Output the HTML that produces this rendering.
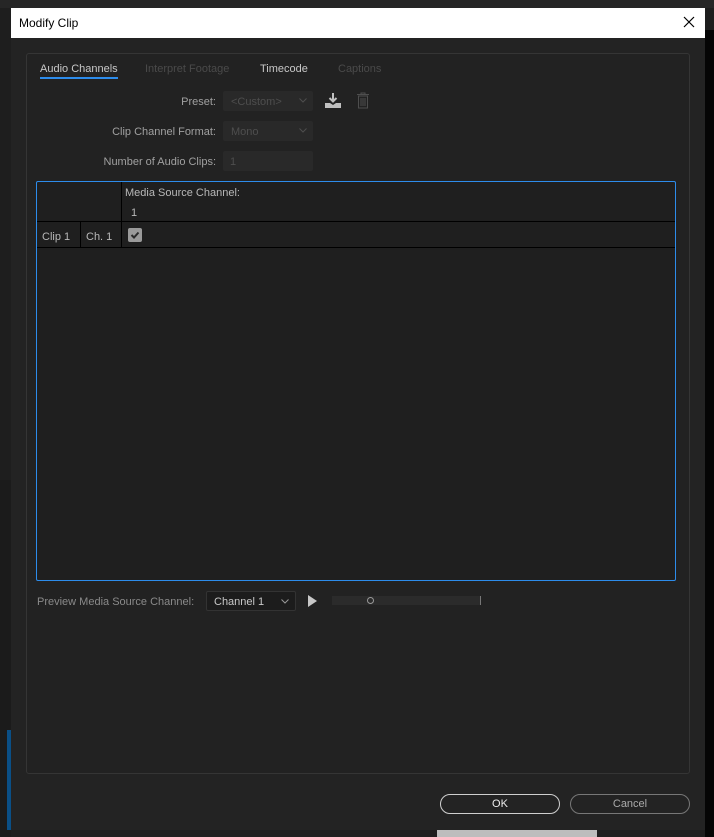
<!DOCTYPE html>
<html><head><style>
*{margin:0;padding:0;box-sizing:border-box}
body{width:714px;height:837px;background:#1e1e1e;position:relative;overflow:hidden;font-family:"Liberation Sans",sans-serif;font-size:11px;color:#b8b8b8}
.a{position:absolute}
.chev{position:absolute;right:6px;top:7px}
</style></head><body>
<div class="a" style="left:0;top:0;width:714px;height:8px;background:#262626"></div>
<div class="a" style="left:705px;top:30px;width:9px;height:807px;background:#050505"></div>
<div class="a" style="left:0;top:480px;width:11px;height:357px;background:#1b1b1b"></div>
<div class="a" style="left:7px;top:730px;width:4px;height:100px;background:#0a4f86"></div>
<div class="a" style="left:11px;top:8px;width:694px;height:30px;background:#fff;color:#000;font-size:12px;padding:8px 0 0 8px">Modify Clip</div>
<svg class="a" style="left:683px;top:16px" width="12" height="12"><path d="M1 1L11 11M11 1L1 11" stroke="#000" stroke-width="1.2"/></svg>
<div class="a" style="left:11px;top:38px;width:694px;height:792px;background:#232323"></div>
<div class="a" style="left:26px;top:53px;width:664px;height:721px;border:1px solid #353535;border-radius:3px;background:#222"></div>
<div class="a" style="left:40px;top:63px;color:#c8c8c8">Audio Channels</div>
<div class="a" style="left:40px;top:77px;width:78px;height:2px;background:#2d8ceb"></div>
<div class="a" style="left:145px;top:63px;color:#4a4a4a">Interpret Footage</div>
<div class="a" style="left:260px;top:63px;color:#c8c8c8">Timecode</div>
<div class="a" style="left:338px;top:63px;color:#4a4a4a">Captions</div>
<div class="a" style="left:100px;top:96px;width:116px;text-align:right;color:#a0a0a0">Preset:</div>
<div class="a" style="left:223px;top:91px;width:90px;height:20px;background:#292929;border-radius:2px;color:#4e4e4e;padding:5px 8px">&lt;Custom&gt;<svg class="chev" width="8" height="5"><path d="M0.5 0.5L4 4 7.5 0.5" stroke="#4e4e4e" fill="none"/></svg></div>
<svg class="a" style="left:324px;top:92px" width="18" height="16"><path d="M9 1V9M5.5 6L9 9.5 12.5 6" stroke="#c0c0c0" stroke-width="2" fill="none"/><path d="M1 11H6L9 13 12 11H17V16H1Z" fill="#c0c0c0"/></svg>
<svg class="a" style="left:356px;top:92px" width="14" height="17"><path d="M1 2.5H13M5 2.5V1H9V2.5M2.5 4H11.5V16H2.5ZM5 6V14M7 6V14M9 6V14" stroke="#4e4e4e" fill="none"/></svg>
<div class="a" style="left:60px;top:126px;width:156px;text-align:right;color:#a0a0a0">Clip Channel Format:</div>
<div class="a" style="left:223px;top:121px;width:90px;height:20px;background:#292929;border-radius:2px;color:#4e4e4e;padding:5px 8px">Mono<svg class="chev" width="8" height="5"><path d="M0.5 0.5L4 4 7.5 0.5" stroke="#4e4e4e" fill="none"/></svg></div>
<div class="a" style="left:60px;top:156px;width:156px;text-align:right;color:#a0a0a0">Number of Audio Clips:</div>
<div class="a" style="left:223px;top:151px;width:90px;height:20px;background:#292929;border-radius:2px;color:#4e4e4e;padding:5px 7px">1</div>
<div class="a" style="left:36px;top:181px;width:640px;height:400px;border:1px solid #2d8ceb;border-radius:2px;background:#1f1f1f"></div>
<div class="a" style="left:121px;top:182px;width:1px;height:66px;background:#000"></div>
<div class="a" style="left:37px;top:221px;width:638px;height:1px;background:#000"></div>
<div class="a" style="left:37px;top:247px;width:638px;height:1px;background:#000"></div>
<div class="a" style="left:80px;top:222px;width:1px;height:26px;background:#000"></div>
<div class="a" style="left:125px;top:187px">Media Source Channel:</div>
<div class="a" style="left:131px;top:207px">1</div>
<div class="a" style="left:42px;top:231px">Clip 1</div>
<div class="a" style="left:86px;top:231px">Ch. 1</div>
<div class="a" style="left:128px;top:228px;width:14px;height:14px;background:#9a9a9a;border-radius:2px"></div>
<svg class="a" style="left:128px;top:228px" width="14" height="14"><path d="M3.5 7L6 9.5 10.5 4.5" stroke="#2a2a2a" stroke-width="2" fill="none"/></svg>
<div class="a" style="left:37px;top:596px;color:#8a8a8a">Preview Media Source Channel:</div>
<div class="a" style="left:206px;top:591px;width:90px;height:20px;background:#1c1c1c;border:1px solid #333;border-radius:2px;color:#c8c8c8;padding:4px 7px">Channel 1<svg class="chev" width="8" height="5" style="top:7px"><path d="M0.5 0.5L4 4 7.5 0.5" stroke="#999" fill="none"/></svg></div>
<svg class="a" style="left:307px;top:595px" width="12" height="12"><path d="M1 0L10 6 1 12Z" fill="#c8c8c8"/></svg>
<div class="a" style="left:332px;top:596px;width:149px;height:9px;background:#2b2b2b;border-right:1px solid #777"></div>
<div class="a" style="left:367px;top:597px;width:7px;height:7px;border:1.5px solid #999;border-radius:50%"></div>
<div class="a" style="left:440px;top:794px;width:120px;height:20px;border:1.5px solid #cfcfcf;border-radius:10px;color:#eee;text-align:center;line-height:18px">OK</div>
<div class="a" style="left:570px;top:794px;width:120px;height:20px;border:1.5px solid #777;border-radius:10px;color:#aaa;text-align:center;line-height:18px">Cancel</div>
<div class="a" style="left:437px;top:830px;width:160px;height:7px;background:#bdbdbd"></div>
</body></html>
